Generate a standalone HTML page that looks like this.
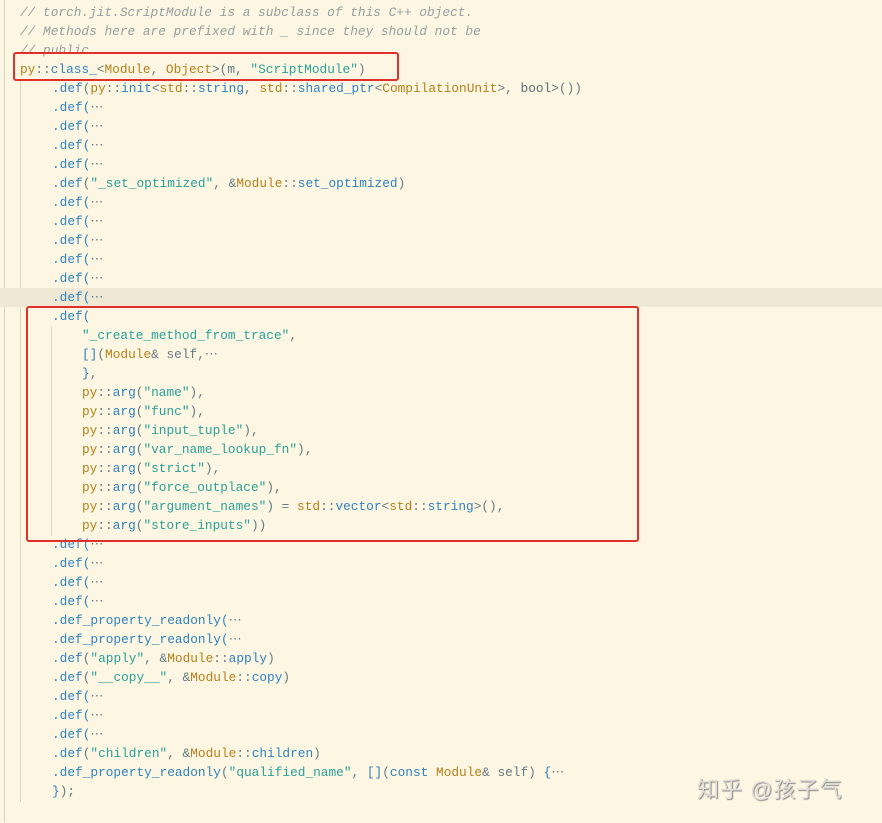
<!DOCTYPE html>
<html><head><meta charset="utf-8"><style>
body{margin:0;width:882px;height:822px;background:#fdf6e3;overflow:hidden;position:relative;font-family:"Liberation Mono",monospace;font-size:12.8px;}
.w{position:absolute;left:0;top:1px;width:882px;height:822px}
.l{position:absolute;left:0;width:882px;height:19px;line-height:19px;white-space:pre;color:#657b83}
.hl{background:#eee8d5}
.c{color:#93a1a1;font-style:italic}
.k{color:#2f83c0}
.s{color:#2aa198}
.t{color:#b5801a}
.g{position:absolute;width:1px;background:#ddd6c1}
.box{position:absolute;border:2px solid #e0302a;border-radius:3px}
.wm{position:absolute;left:697px;top:772px;font-family:"Liberation Sans","Noto Sans CJK SC",sans-serif;font-size:22px;color:#e0ddd6;text-shadow:1px 1px 1px #888;letter-spacing:1px}
</style></head><body>
<div class="g" style="left:4px;top:0;height:822px;background:#d8d2c0"></div>
<div class="w">
<div class="g" style="left:20px;top:79px;height:722px"></div>
<div class="g" style="left:51px;top:326px;height:209px"></div>
<div class="l" style="top:2px;left:20px"><span class="c">// torch.jit.ScriptModule is a subclass of this C++ object.</span></div>
<div class="l" style="top:21px;left:20px"><span class="c">// Methods here are prefixed with _ since they should not be</span></div>
<div class="l" style="top:40px;left:20px"><span class="c">// public.</span></div>
<div class="l" style="top:59px;left:20px"><span class="t">py</span>::<span class="k">class_</span>&lt;<span class="t">Module</span>, <span class="t">Object</span>&gt;(m, <span class="s">"ScriptModule"</span>)</div>
<div class="l" style="top:78px;left:52px"><span class="k">.def</span>(<span class="t">py</span>::<span class="k">init</span>&lt;<span class="t">std</span>::<span class="k">string</span>, <span class="t">std</span>::<span class="k">shared_ptr</span>&lt;<span class="t">CompilationUnit</span>&gt;, <b style="font-weight:normal;color:#586e75">bool</b>&gt;())</div>
<div class="l" style="top:97px;left:52px"><span class="k">.def(</span>⋯</div>
<div class="l" style="top:116px;left:52px"><span class="k">.def(</span>⋯</div>
<div class="l" style="top:135px;left:52px"><span class="k">.def(</span>⋯</div>
<div class="l" style="top:154px;left:52px"><span class="k">.def(</span>⋯</div>
<div class="l" style="top:173px;left:52px"><span class="k">.def</span>(<span class="s">"_set_optimized"</span>, &amp;<span class="t">Module</span>::<span class="k">set_optimized</span>)</div>
<div class="l" style="top:192px;left:52px"><span class="k">.def(</span>⋯</div>
<div class="l" style="top:211px;left:52px"><span class="k">.def(</span>⋯</div>
<div class="l" style="top:230px;left:52px"><span class="k">.def(</span>⋯</div>
<div class="l" style="top:249px;left:52px"><span class="k">.def(</span>⋯</div>
<div class="l" style="top:268px;left:52px"><span class="k">.def(</span>⋯</div>
<div class="l hl" style="top:287px;padding-left:52px;left:0;width:830px"><span class="k">.def(</span>⋯</div>
<div class="l" style="top:306px;left:52px"><span class="k">.def(</span></div>
<div class="l" style="top:325px;left:82px"><span class="s">"_create_method_from_trace"</span>,</div>
<div class="l" style="top:344px;left:82px"><span class="k">[]</span>(<span class="t">Module</span>&amp; self,⋯</div>
<div class="l" style="top:363px;left:82px"><span class="k">}</span>,</div>
<div class="l" style="top:382px;left:82px"><span class="t">py</span>::<span class="k">arg</span>(<span class="s">"name"</span>),</div>
<div class="l" style="top:401px;left:82px"><span class="t">py</span>::<span class="k">arg</span>(<span class="s">"func"</span>),</div>
<div class="l" style="top:420px;left:82px"><span class="t">py</span>::<span class="k">arg</span>(<span class="s">"input_tuple"</span>),</div>
<div class="l" style="top:439px;left:82px"><span class="t">py</span>::<span class="k">arg</span>(<span class="s">"var_name_lookup_fn"</span>),</div>
<div class="l" style="top:458px;left:82px"><span class="t">py</span>::<span class="k">arg</span>(<span class="s">"strict"</span>),</div>
<div class="l" style="top:477px;left:82px"><span class="t">py</span>::<span class="k">arg</span>(<span class="s">"force_outplace"</span>),</div>
<div class="l" style="top:496px;left:82px"><span class="t">py</span>::<span class="k">arg</span>(<span class="s">"argument_names"</span>) = <span class="t">std</span>::<span class="k">vector</span>&lt;<span class="t">std</span>::<span class="k">string</span>&gt;(),</div>
<div class="l" style="top:515px;left:82px"><span class="t">py</span>::<span class="k">arg</span>(<span class="s">"store_inputs"</span>))</div>
<div class="l" style="top:534px;left:52px"><span class="k">.def(</span>⋯</div>
<div class="l" style="top:553px;left:52px"><span class="k">.def(</span>⋯</div>
<div class="l" style="top:572px;left:52px"><span class="k">.def(</span>⋯</div>
<div class="l" style="top:591px;left:52px"><span class="k">.def(</span>⋯</div>
<div class="l" style="top:610px;left:52px"><span class="k">.def_property_readonly(</span>⋯</div>
<div class="l" style="top:629px;left:52px"><span class="k">.def_property_readonly(</span>⋯</div>
<div class="l" style="top:648px;left:52px"><span class="k">.def</span>(<span class="s">"apply"</span>, &amp;<span class="t">Module</span>::<span class="k">apply</span>)</div>
<div class="l" style="top:667px;left:52px"><span class="k">.def</span>(<span class="s">"__copy__"</span>, &amp;<span class="t">Module</span>::<span class="k">copy</span>)</div>
<div class="l" style="top:686px;left:52px"><span class="k">.def(</span>⋯</div>
<div class="l" style="top:705px;left:52px"><span class="k">.def(</span>⋯</div>
<div class="l" style="top:724px;left:52px"><span class="k">.def(</span>⋯</div>
<div class="l" style="top:743px;left:52px"><span class="k">.def</span>(<span class="s">"children"</span>, &amp;<span class="t">Module</span>::<span class="k">children</span>)</div>
<div class="l" style="top:762px;left:52px"><span class="k">.def_property_readonly</span>(<span class="s">"qualified_name"</span>, <span class="k">[]</span>(<span class="k">const</span> <span class="t">Module</span>&amp; self) <span class="k">{</span>⋯</div>
<div class="l" style="top:781px;left:52px"><span class="k">}</span>);</div>
</div>
<div class="box" style="left:13px;top:52px;width:382px;height:25px"></div>
<div class="box" style="left:26px;top:306px;width:609px;height:232px"></div>
<div class="wm">知乎 @孩子气</div>
</body></html>
